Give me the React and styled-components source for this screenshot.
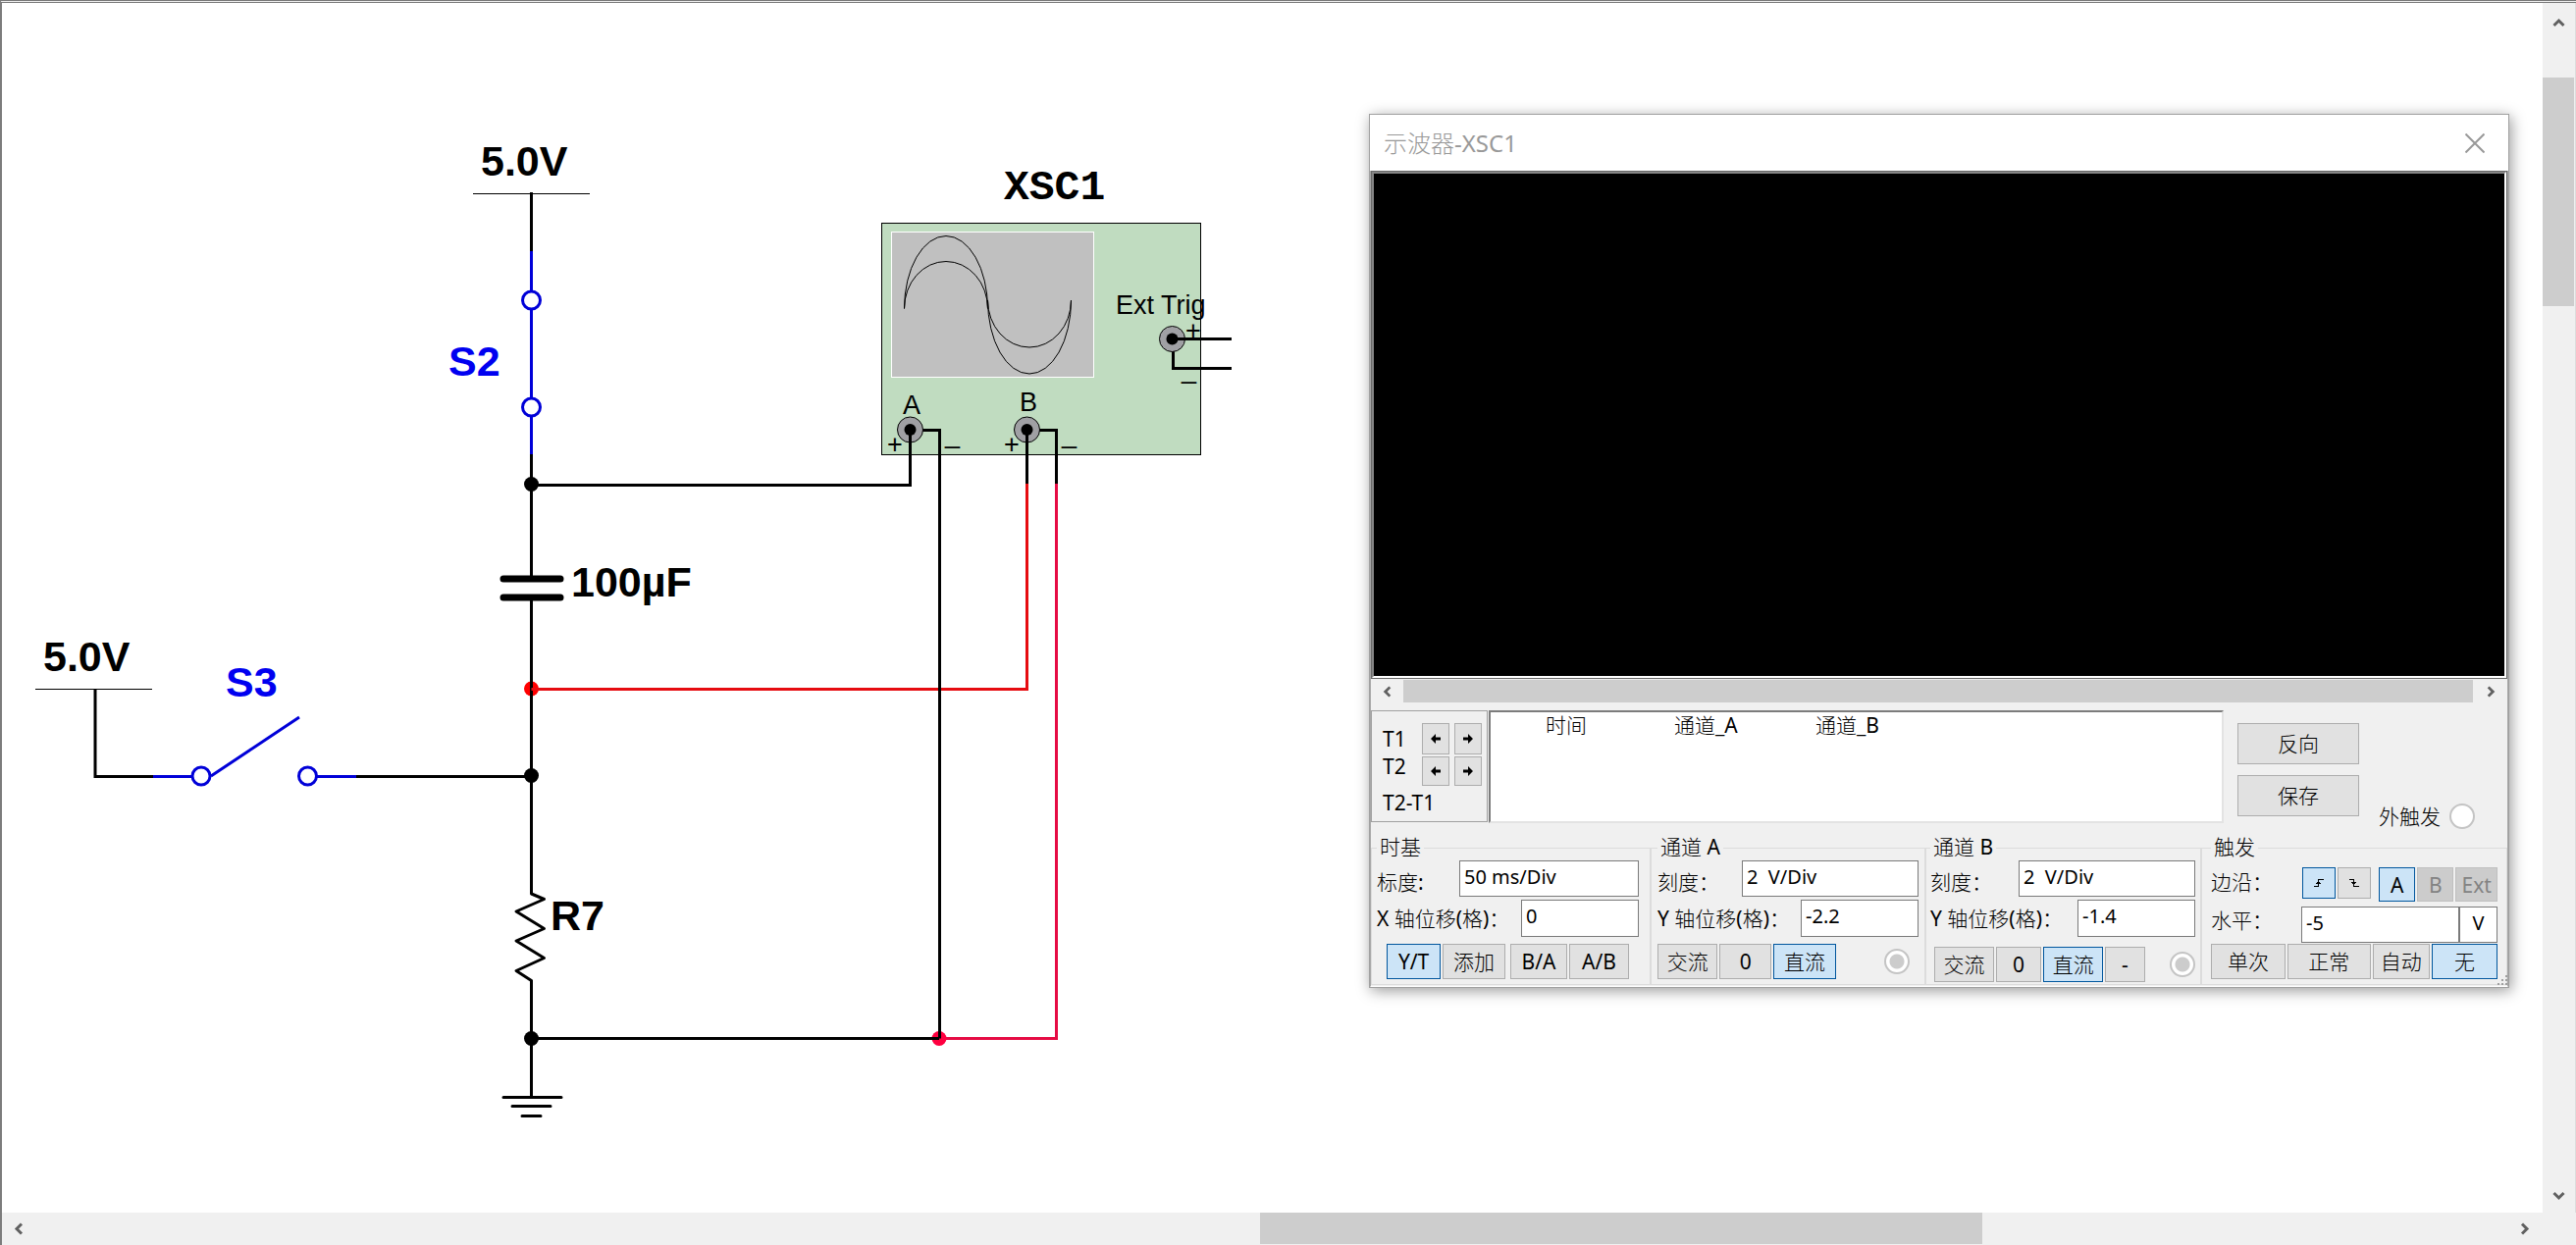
import React from "react"
import styled, { createGlobalStyle } from "styled-components"

const uiFont = `"Noto Sans", "Noto Sans CJK SC Light", "Noto Sans CJK SC", sans-serif`

const GlobalStyle = createGlobalStyle`
  * {
    box-sizing: border-box;
  }
  body {
    margin: 0;
    background: white;
    font-family: ${uiFont};
    color: black;
  }
  button, input {
    font-family: inherit;
    color: inherit;
    margin: 0;
  }
`

/* ---------- workspace ---------- */

const Workspace = styled.div`
  display: grid;
  grid-template-columns: 1fr 34px;
  grid-template-rows: 1fr 33px;
  height: 100vh;
  border-left: 2px solid #7c7c7c;
  border-top: 3px double #777777;
  background: #f0f0f0;
`
const Canvas = styled.main`
  position: relative;
  overflow: hidden;
  background: white;
`
const VerticalBar = styled.div`
  display: flex;
  flex-direction: column;
  align-items: stretch;
  border-right: 1px solid #dcdcdc;
`
const HorizontalBar = styled.div`
  display: flex;
  align-items: stretch;
`
const VerticalTrack = styled.div`
  flex: 1;
  display: grid;
  grid-template-rows: 36fr 233fr 889fr;
  padding-right: 1px;
`
const HorizontalTrack = styled.div`
  flex: 1;
  display: grid;
  grid-template-columns: 1248fr 736fr 533fr;
  padding-bottom: 1px;
`
const Thumb = styled.div`
  background: #cdcdcd;
  grid-row: ${props => (props.$vertical ? 2 : "auto")};
  grid-column: ${props => (props.$vertical ? "auto" : 2)};
`
const ScrollButton = styled.button`
  display: flex;
  align-items: center;
  justify-content: center;
  flex: none;
  width: ${props => props.$w}px;
  height: ${props => props.$h}px;
  padding: 0;
  border: 0;
  background: #f0f0f0;
  color: #606060;
`

/* ---------- schematic ---------- */

const Drawing = styled.svg`
  display: block;
  width: 1268px;
  height: 1157px;
`
const Wire = styled.path`
  fill: none;
  stroke: ${props => props.$color || "#000000"};
  stroke-width: ${props => props.$width || 3};
`
const Terminal = styled.circle`
  fill: white;
  stroke: #0000d8;
  stroke-width: 3;
`
const PartLabel = styled.text`
  font-family: "Liberation Sans", Arial, sans-serif;
  font-size: 43px;
  font-weight: bold;
  fill: ${props => props.$color || "#000000"};
`
const InstrumentName = styled.text`
  font-family: "Liberation Mono", "Courier New", monospace;
  font-size: 43px;
  font-weight: bold;
`
const PinLabel = styled.text`
  font-family: "Liberation Sans", Arial, sans-serif;
  font-size: 27px;
`

/* ---------- oscilloscope window ---------- */

const ScopeWindow = styled.section`
  position: absolute;
  top: 113px;
  left: 1393px;
  right: 34px;
  border: 1px solid #a0a0a0;
  background: white;
  box-shadow: 2px 3px 14px rgba(0, 0, 0, 0.4);
`
const TitleBar = styled.header`
  display: flex;
  align-items: center;
  justify-content: space-between;
  height: 57px;
  padding: 0 24px 0 14px;
  background: white;
`
const Title = styled.h1`
  margin: 0;
  font-size: 24px;
  font-weight: normal;
  line-height: 32px;
  color: #999999;
`
const CloseButton = styled.button`
  display: flex;
  padding: 0;
  border: 0;
  background: none;
  color: #999999;
`
const Body = styled.div`
  display: flex;
  flex-direction: column;
  padding-bottom: 1px;
  border: 1px solid #a8a8a8;
  border-top: 0;
  border-bottom-color: white;
  background: #f0f0f0;
`
const ScreenFrame = styled.div`
  border: 1px solid #696969;
`
const Screen = styled.div`
  height: 516px;
  background: black;
  border: 2px solid white;
  border-top-color: #868686;
  border-left-color: #868686;
`
const ScopeBar = styled.div`
  display: flex;
  margin-top: 1px;
  height: 23px;
`
const ScopeThumb = styled.div`
  flex: 1;
  background: #cdcdcd;
`
const Readout = styled.div`
  display: flex;
  align-items: flex-start;
  height: 127px;
  margin-top: 8px;
`
const CursorPanel = styled.div`
  display: grid;
  grid-template-columns: 1fr 28px 28px;
  grid-template-rows: 32px 30px 1fr;
  gap: 2px 5px;
  align-items: center;
  width: 119px;
  height: 114px;
  margin-right: 1px;
  padding: 12px 5px 4px 11px;
  border: 1px solid #a0a0a0;
`
const CursorName = styled.span`
  font-size: 21px;
  line-height: 20px;
  align-self: ${props => (props.$top ? "start" : "center")};
  grid-column: ${props => (props.$wide ? "1 / -1" : "auto")};
`
const Measurements = styled.div`
  flex: 1;
  height: 115px;
  background: white;
  border: 2px solid #e3e3e3;
  border-top-color: #7c7c7c;
  border-left-color: #7c7c7c;
`
const MeasureTable = styled.table`
  border-collapse: collapse;
  margin-left: 56px;

  th {
    padding: 0;
    font-size: 21px;
    font-weight: normal;
    line-height: 26px;
    text-align: left;
  }
  th:first-child {
    width: 131px;
  }
  th:nth-child(2) {
    width: 144px;
  }
`
const ReadoutActions = styled.div`
  display: flex;
  flex-direction: column;
  gap: 11px;
  margin: 13px 20px 0 14px;
`
const ExternalTrigger = styled.label`
  display: flex;
  align-items: center;
  gap: 9px;
  height: 28px;
  margin: 94px 33px 0 0;
  font-size: 21px;
  line-height: 24px;
`
const Button = styled.button`
  display: flex;
  align-items: center;
  justify-content: center;
  flex: ${props => (props.$w ? `${props.$w} 0 0` : "none")};
  min-width: 0;
  width: ${props => (props.$fixed ? `${props.$fixed}px` : "auto")};
  height: ${props => props.$h || 36}px;
  padding: 0;
  border: 1px solid ${props => (props.$on ? "#00569d" : "#adadad")};
  background: ${props => (props.$on ? "#cce4f7" : "#e1e1e1")};
  font-size: 21px;
  line-height: 28px;
  white-space: nowrap;

  &:disabled {
    border-color: #bfbfbf;
    background: #cccccc;
    color: #838383;
  }
`
const Radio = styled.input`
  appearance: none;
  flex: none;
  width: 26px;
  height: 26px;
  border: 2px solid #c4c4c4;
  border-radius: 50%;
  background: white;

  &:checked {
    background: radial-gradient(circle, #cccccc 7px, white 8px);
  }
`
const Groups = styled.div`
  display: grid;
  grid-template-columns: 285fr 280fr 281fr 312fr;
`
const Group = styled.fieldset`
  min-width: 0;
  margin: 0;
  padding: ${props => props.$pad};
  border: 1px solid #dcdcdc;
`
const Legend = styled.legend`
  height: 26px;
  padding: 0 3px;
  font-size: 21px;
  line-height: 24px;
`
const Field = styled.label`
  display: flex;
  height: ${props => props.$h}px;
  margin-bottom: ${props => props.$after}px;
  font-size: 21px;
  line-height: 28px;
  white-space: nowrap;
`
const FieldName = styled.span`
  width: ${props => props.$w}px;
  flex: none;
  padding-top: ${props => props.$top}px;
`
const TextBox = styled.input`
  flex: ${props => (props.$fixed ? "none" : 1)};
  width: ${props => (props.$fixed ? `${props.$fixed}px` : "auto")};
  min-width: 0;
  height: 100%;
  padding: 0 4px 5px;
  border: 1px solid #7a7a7a;
  border-radius: 0;
  background: white;
  font-size: 20px;
  text-align: ${props => (props.$center ? "center" : "left")};
`
const ButtonRow = styled.div`
  display: flex;
  align-items: center;
  gap: 2px;
  padding: ${props => props.$pad || "0"};
`
const Spacer = styled.div`
  flex: ${props => props.$w} 0 0;
`
const EdgeRow = styled.div`
  display: flex;
  align-items: flex-start;
  gap: 2px;
  height: 35px;
  margin-bottom: 5px;
  font-size: 21px;
  line-height: 28px;
`
const Grip = styled.svg`
  position: absolute;
  right: 1px;
  bottom: 2px;
`

const Chevron = ({ turn = 0, size = 13 }) => (
  <svg width={size} height={size} viewBox="0 0 13 13">
    <path
      d="M1.5 9L6.5 4L11.5 9"
      fill="none"
      stroke="currentColor"
      strokeWidth="3"
      transform={`rotate(${turn} 6.5 6.5)`}
    />
  </svg>
)

const Arrow = ({ right }) => (
  <svg width="10" height="10" viewBox="0 0 10 10">
    <path
      d="M0 5L5 0V3.5H10V6.5H5V10Z"
      transform={right ? "rotate(180 5 5)" : undefined}
    />
  </svg>
)

const Edge = ({ falling }) => (
  <svg width="10" height="10" viewBox="0 0 10 10" shapeRendering="crispEdges">
    <path
      d={
        falling
          ? "M0 1.5H4.5V8.5H10M2 4.5H7M3 5.5H6"
          : "M0 8.5H4.5V1.5H10M2 5.5H7M3 4.5H6"
      }
      fill="none"
      stroke="black"
    />
  </svg>
)

const Socket = ({ x, y }) => (
  <>
    <circle cx={x} cy={y} r="13" fill="#a0a0a4" stroke="black" />
    <circle cx={x} cy={y} r="6" />
  </>
)

const Schematic = () => (
  <Drawing viewBox="2 3 1268 1157" role="img" aria-label="Circuit">
    <rect x="898.5" y="227.5" width="325" height="236" fill="#c0dcc0" stroke="black" />
    <rect x="908.5" y="236.5" width="206" height="148" fill="#c0c0c0" stroke="white" />
    <Wire
      $width={1}
      d="M921.5 314.5A42.5 74 0 0 1 1006.5 314.5M921.5 314.5A42.5 48 0 0 1 1006.5 314.5M1006.5 306A42.5 75 0 0 0 1091.5 306M1006.5 306A42.5 48 0 0 0 1091.5 306"
    />

    {/* supplies */}
    <circle cx="541.5" cy="702" r="7.5" fill="#ff0000" />
    <Wire $width={1} d="M482 197.5H601M36 702.5H155" />
    <Wire d="M541.5 196V256M541.5 463V590M541.5 609V911M541.5 999V1118" />
    <Wire d="M97 702V791.5H156M363 791.5H541" />

    {/* capacitor, resistor, ground */}
    <Wire $width={7} strokeLinecap="round" d="M513 590H571M513 609H571" />
    <Wire
      strokeLinejoin="round"
      d="M541.5 910V911L554.5 916.5L526 929L554.5 946.5L526 959L554.5 976.5L526 989.5L541.5 999.5V1001"
    />
    <Wire strokeLinecap="round" d="M513 1118.5H572M522 1127.5H561M532 1137.5H551" />

    {/* switches */}
    <Wire $color="#0000d8" d="M541.5 256V463M156 791.5H195M323 791.5H363M215 791L305 731" />
    <Terminal cx="541.5" cy="306" r="9" />
    <Terminal cx="541.5" cy="415" r="9" />
    <Terminal cx="205" cy="791" r="9" />
    <Terminal cx="313.5" cy="791" r="9" />

    {/* scope wiring */}
    <Wire $color="#e60c10" d="M1046.5 493V702.5H541.5" />
    <Wire $color="#e60c44" d="M1076.5 493V1058.5H957.5" />
    <circle cx="957" cy="1058.5" r="7.5" fill="#ff0040" />
    <Wire d="M541.5 494.5H927.5V438" />
    <Wire d="M927.5 438.5H957.5V1058.5M541.5 1058.5H957" />
    <Wire d="M1046.5 438V493M1046.5 438.5H1076.5V493" />
    <Wire d="M1195.5 345.5V375.5H1255" />
    <Socket x={927.5} y={438} />
    <Socket x={1046.5} y={438} />
    <Socket x={1194.5} y={345.5} />
    <Wire d="M927.5 438V470M1046.5 438V470M1194.5 345.5H1255" />

    <circle cx="541.5" cy="493.5" r="7.5" />
    <circle cx="541.5" cy="790.5" r="7.5" />
    <circle cx="541.5" cy="1058.5" r="7.5" />

    <PartLabel x="490" y="179">5.0V</PartLabel>
    <PartLabel x="457" y="383" $color="#0000f0">S2</PartLabel>
    <PartLabel x="582" y="608">100µF</PartLabel>
    <PartLabel x="44" y="684">5.0V</PartLabel>
    <PartLabel x="230" y="710" $color="#0000f0">S3</PartLabel>
    <PartLabel x="561" y="948">R7</PartLabel>
    <InstrumentName x="1023" y="203">XSC1</InstrumentName>
    <PinLabel x="1137" y="320">Ext Trig</PinLabel>
    <PinLabel x="920" y="422">A</PinLabel>
    <PinLabel x="1039" y="419">B</PinLabel>
    <PinLabel x="904" y="462">+</PinLabel>
    <PinLabel x="963" y="451">_</PinLabel>
    <PinLabel x="1023" y="462">+</PinLabel>
    <PinLabel x="1082" y="451">_</PinLabel>
    <PinLabel x="1208" y="346">+</PinLabel>
    <PinLabel x="1204" y="385">_</PinLabel>
  </Drawing>
)

const Oscilloscope = () => (
  <ScopeWindow>
    <TitleBar>
      <Title>示波器-XSC1</Title>
      <CloseButton aria-label="关闭">
        <svg width="20" height="20" viewBox="0 0 20 20">
          <path d="M0.5 0.5L19.5 19.5M19.5 0.5L0.5 19.5" stroke="currentColor" strokeWidth="2" />
        </svg>
      </CloseButton>
    </TitleBar>
    <Body>
      <ScreenFrame>
        <Screen />
      </ScreenFrame>
      <ScopeBar>
        <ScrollButton $w={33} $h={23} aria-label="向左"><Chevron turn={-90} size={12} /></ScrollButton>
        <ScopeThumb />
        <ScrollButton $w={35} $h={23} aria-label="向右"><Chevron turn={90} size={12} /></ScrollButton>
      </ScopeBar>

      <Readout>
        <CursorPanel>
          <CursorName>T1</CursorName>
          <Button $h={32} aria-label="T1 左移"><Arrow /></Button>
          <Button $h={32} aria-label="T1 右移"><Arrow right /></Button>
          <CursorName $top>T2</CursorName>
          <Button $h={30} aria-label="T2 左移"><Arrow /></Button>
          <Button $h={30} aria-label="T2 右移"><Arrow right /></Button>
          <CursorName $wide>T2-T1</CursorName>
        </CursorPanel>
        <Measurements>
          <MeasureTable>
            <thead>
              <tr>
                <th>时间</th>
                <th>通道_A</th>
                <th>通道_B</th>
              </tr>
            </thead>
          </MeasureTable>
        </Measurements>
        <ReadoutActions>
          <Button $fixed={124} $h={42}>反向</Button>
          <Button $fixed={124} $h={42}>保存</Button>
        </ReadoutActions>
        <ExternalTrigger>
          外触发
          <Radio type="radio" name="external" />
        </ExternalTrigger>
      </Readout>

      <Groups>
        <Group $pad="0 11px 2px 5px">
          <Legend>时基</Legend>
          <Field $h={37} $after={3}>
            <FieldName $w={84} $top={8}>标度:</FieldName>
            <TextBox defaultValue="50 ms/Div" />
          </Field>
          <Field $h={38} $after={7}>
            <FieldName $w={147} $top={5}>X 轴位移(格)：</FieldName>
            <TextBox defaultValue="0" />
          </Field>
          <ButtonRow $pad="0 10px">
            <Button $w={55} $on>Y/T</Button>
            <Button $w={64}>添加</Button>
            <Spacer $w={1} />
            <Button $w={58}>B/A</Button>
            <Button $w={61}>A/B</Button>
          </ButtonRow>
        </Group>

        <Group $pad="0 6px 2px">
          <Legend>通道 A</Legend>
          <Field $h={37} $after={3}>
            <FieldName $w={86} $top={8}>刻度：</FieldName>
            <TextBox defaultValue="2  V/Div" />
          </Field>
          <Field $h={38} $after={7}>
            <FieldName $w={146} $top={5}>Y 轴位移(格)：</FieldName>
            <TextBox defaultValue="-2.2" />
          </Field>
          <ButtonRow $pad="0 9px 0 0">
            <Button $w={61}>交流</Button>
            <Button $w={52}>0</Button>
            <Button $w={64} $on>直流</Button>
            <Spacer $w={46} />
            <Radio type="radio" name="channelA" aria-label="通道 A" defaultChecked />
          </ButtonRow>
        </Group>

        <Group $pad="0 5px 2px 4px">
          <Legend>通道 B</Legend>
          <Field $h={37} $after={3}>
            <FieldName $w={90} $top={8}>刻度：</FieldName>
            <TextBox defaultValue="2  V/Div" />
          </Field>
          <Field $h={38} $after={7}>
            <FieldName $w={150} $top={5}>Y 轴位移(格)：</FieldName>
            <TextBox defaultValue="-1.4" />
          </Field>
          <ButtonRow $pad="3px 0 0 4px">
            <Button $w={61}>交流</Button>
            <Button $w={46}>0</Button>
            <Button $w={61} $on>直流</Button>
            <Button $w={40}>-</Button>
            <Spacer $w={22} />
            <Radio type="radio" name="channelB" aria-label="通道 B" defaultChecked />
          </ButtonRow>
        </Group>

        <Group $pad="7px 9px 2px">
          <Legend>触发</Legend>
          <EdgeRow>
            <FieldName $w={91} $top={1}>边沿：</FieldName>
            <Button $w={34} $h={32} $on aria-label="上升沿"><Edge /></Button>
            <Button $w={34} $h={32} aria-label="下降沿"><Edge falling /></Button>
            <Spacer $w={4} />
            <Button $w={37} $h={35} $on>A</Button>
            <Button $w={37} $h={35} disabled>B</Button>
            <Button $w={43} $h={35} disabled>Ext</Button>
          </EdgeRow>
          <Field $h={37} $after={1}>
            <FieldName $w={92} $top={0}>水平：</FieldName>
            <TextBox defaultValue="-5" />
            <TextBox defaultValue="V" $fixed={39} $center aria-label="单位" />
          </Field>
          <ButtonRow>
            <Button $w={76}>单次</Button>
            <Button $w={85}>正常</Button>
            <Button $w={58}>自动</Button>
            <Button $w={67} $on>无</Button>
          </ButtonRow>
        </Group>
      </Groups>
      <Grip width="10" height="10" viewBox="0 0 10 10" fill="#a0a0a0">
        <path d="M8 0h2v2h-2zM8 4h2v2h-2zM4 4h2v2h-2zM8 8h2v2h-2zM4 8h2v2h-2zM0 8h2v2h-2z" />
      </Grip>
    </Body>
  </ScopeWindow>
)

export default function App() {
  return (
    <>
      <GlobalStyle />
      <Workspace>
        <Canvas>
          <Schematic />
          <Oscilloscope />
        </Canvas>
        <VerticalBar>
          <ScrollButton $w={32} $h={40} aria-label="向上"><Chevron /></ScrollButton>
          <VerticalTrack>
            <Thumb $vertical />
          </VerticalTrack>
          <ScrollButton $w={32} $h={35} aria-label="向下"><Chevron turn={180} /></ScrollButton>
        </VerticalBar>
        <HorizontalBar>
          <ScrollButton $w={34} $h={33} aria-label="向左"><Chevron turn={-90} /></ScrollButton>
          <HorizontalTrack>
            <Thumb />
          </HorizontalTrack>
          <ScrollButton $w={38} $h={33} aria-label="向右"><Chevron turn={90} /></ScrollButton>
        </HorizontalBar>
      </Workspace>
    </>
  )
}
